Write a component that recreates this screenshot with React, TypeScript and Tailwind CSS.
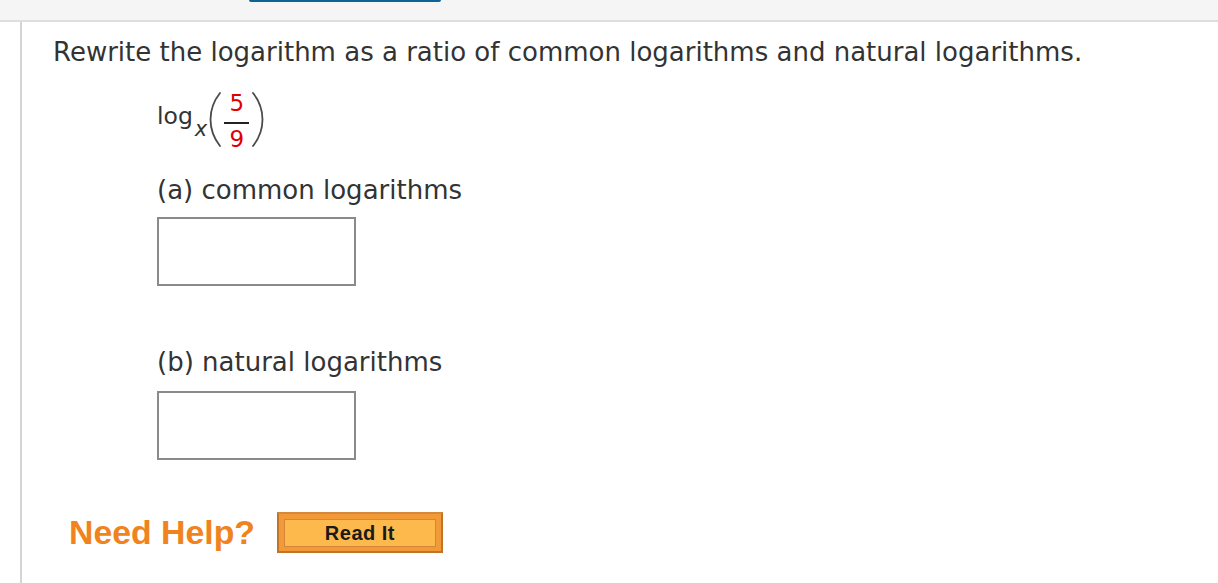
import React from 'react';

const AnswerBox: React.FC = () => (
  <div className="w-[199px] h-[69px] border-2 border-[#8a8a8a] bg-white" />
);

// tall math parenthesis drawn as a stretched stroke
const Paren: React.FC<{ right?: boolean }> = ({ right }) => (
  <svg width="15" height="57" viewBox="0 0 15 57" className="shrink-0">
    <path
      d={right ? 'M3 2 Q12.5 14 12.5 28.5 Q12.5 43 3 55' : 'M12 2 Q2.5 14 2.5 28.5 Q2.5 43 12 55'}
      fill="none"
      stroke="#4a4a4a"
      strokeWidth="1.8"
      strokeLinecap="round"
    />
  </svg>
);

const App: React.FC = () => {
  return (
    <div className="w-[1218px] h-[583px] bg-white overflow-hidden font-['DejaVu_Sans',Verdana,sans-serif] text-[#333]">
      {/* top strip */}
      <div className="h-[22px] bg-[#f5f5f5] border-b-2 border-[#dedede] flex">
        <div className="ml-[249px] w-[192px] h-[2px] bg-[#0d6296] rounded-b-[2px]" />
      </div>
      <div className="flex h-[561px]">
        <div className="ml-[20px] w-[2px] bg-[#d4d4d4]" />
        <div className="pl-[31px] pt-[15px] flex flex-col">
          <p className="text-[26px] leading-[30px]">
            Rewrite the logarithm as a ratio of common logarithms and natural logarithms.
          </p>
          <div className="ml-[104px] mt-[23px] flex items-center h-[62px]">
            <span className="text-[23.5px] leading-none -mt-[8px]">log</span>
            <span className="text-[21px] leading-none italic mt-[16px] ml-[2px]">x</span>
            <div className="ml-[1px] -mt-[3px]">
              <Paren />
            </div>
            <span className="flex flex-col items-center mx-[1px] text-[#e00000] text-[23px] leading-[25px]">
              <span>5</span>
              <span className="w-[25px] h-[2px] bg-[#222] mt-[6px] mb-[3px]" />
              <span>9</span>
            </span>
            <div className="-mt-[3px]">
              <Paren right />
            </div>
          </div>
          <div className="ml-[104px] flex flex-col">
            <p className="mt-[23px] text-[26px] leading-[30px]">(a) common logarithms</p>
            <div className="mt-[12px]">
              <AnswerBox />
            </div>
            <p className="mt-[61px] text-[26px] leading-[30px]">(b) natural logarithms</p>
            <div className="mt-[14px]">
              <AnswerBox />
            </div>
          </div>
          <div className="mt-[52px] ml-[16px] flex items-center gap-[22px]">
            <span className="font-['Liberation_Sans',Arial,sans-serif] font-bold text-[33.8px] leading-none text-[#f0831e]">
              Need Help?
            </span>
            <button className="w-[166px] h-[41px] border-2 border-[#c0742a] bg-[#f29a37] border-t-[#d5893c] pt-[5px] px-[5px] pb-[4px] flex">
              <span className="flex-1 border border-[#d1883a] bg-[#fdb94c] flex items-center justify-center font-['Liberation_Sans',Arial,sans-serif] font-bold text-[20px] tracking-[0.5px] text-[#1a1a1a]">
                Read It
              </span>
            </button>
          </div>
        </div>
      </div>
    </div>
  );
};

export default App;
